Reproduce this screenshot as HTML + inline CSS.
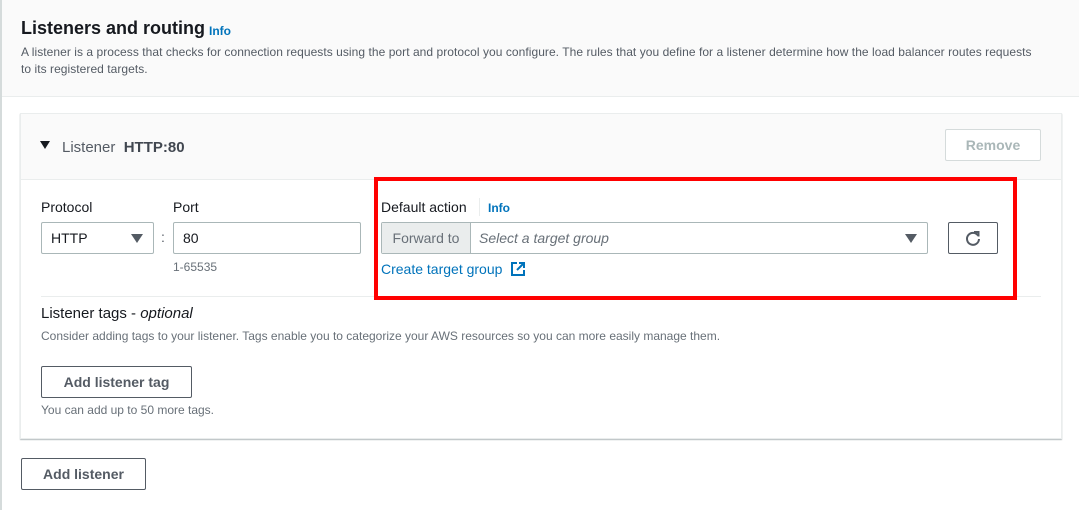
<!DOCTYPE html>
<html><head><meta charset="utf-8"><style>
*{box-sizing:border-box;margin:0;padding:0}
body{width:1079px;height:510px;background:#fff;font-family:"Liberation Sans",sans-serif;color:#16191f;position:relative;overflow:hidden}
.a{position:absolute;white-space:nowrap}
.hdr{left:0;top:0;width:1079px;height:97px;background:#fafafa;border-bottom:1px solid #eaeded}
.lb{left:0;top:0;width:2px;height:510px;background:#d5dbdb}
.card{left:20px;top:113px;width:1042px;height:326px;border:1px solid #eaeded;box-shadow:0 1px 1px rgba(0,28,36,.3)}
.ch{left:21px;top:114px;width:1040px;height:66px;background:#fafafa;border-bottom:1px solid #eaeded}
.btn{border:1px solid #545b64;border-radius:2px;background:#fff;font-weight:bold;font-size:14px;color:#545b64;display:flex;align-items:center;justify-content:center}
.inp{border:1px solid #aab7b8;border-radius:2px;background:#fff;font-size:14px;display:flex;align-items:center;padding-left:9px}
.lbl{font-size:14px;color:#16191f}
.sm{font-size:12px;color:#687078}
.tri{width:0;height:0;border-left:6px solid transparent;border-right:6px solid transparent;border-top:9px solid #545b64}
</style></head><body>
<div class="a hdr"></div>
<div class="a lb"></div>
<div class="a" style="left:21px;top:18px;font-size:18px;font-weight:bold">Listeners and routing</div>
<div class="a" style="left:209px;top:24px;font-size:12px;font-weight:bold;color:#0073bb">Info</div>
<div class="a" style="left:21px;top:44px;font-size:12px;color:#545b64;line-height:17px;letter-spacing:0.05px">A listener is a process that checks for connection requests using the port and protocol you configure. The rules that you define for a listener determine how the load balancer routes requests<br>to its registered targets.</div>

<div class="a card"></div>
<div class="a ch"></div>
<div class="a" style="left:40px;top:141px;width:0;height:0;border-left:5px solid transparent;border-right:5px solid transparent;border-top:8px solid #16191f"></div>
<div class="a" style="left:62px;top:139px;font-size:15px;color:#545b64">Listener&nbsp;&nbsp;<b style="color:#414750">HTTP:80</b></div>
<div class="a btn" style="left:945px;top:129px;width:96px;height:32px;border-color:#d5dbdb;color:#aab7b8">Remove</div>

<div class="a lbl" style="left:41px;top:199px">Protocol</div>
<div class="a lbl" style="left:173px;top:199px">Port</div>
<div class="a inp" style="left:41px;top:222px;width:113px;height:32px">HTTP</div>
<div class="a tri" style="left:131px;top:234px"></div>
<div class="a" style="left:161px;top:229px;font-size:14px;color:#545b64">:</div>
<div class="a inp" style="left:173px;top:222px;width:188px;height:32px">80</div>
<div class="a sm" style="left:173px;top:260px">1-65535</div>

<div class="a" style="left:41px;top:296px;width:1000px;height:1px;background:#eaeded"></div>

<div class="a lbl" style="left:381px;top:199px">Default action</div>
<div class="a" style="left:479px;top:198px;width:1px;height:18px;background:#eaeded"></div>
<div class="a" style="left:488px;top:201px;font-size:12px;font-weight:bold;color:#0073bb">Info</div>
<div class="a inp" style="left:381px;top:222px;width:547px;height:32px;padding-left:0">
<div style="width:89px;height:30px;background:#eaeded;border-right:1px solid #aab7b8;color:#687078;display:flex;align-items:center;justify-content:center">Forward to</div>
<div style="padding-left:8px;font-style:italic;color:#687078">Select a target group</div></div>
<div class="a tri" style="left:905px;top:234px"></div>
<div class="a btn" style="left:948px;top:222px;width:50px;height:32px">
<svg width="18" height="18" viewBox="0 0 18 18" fill="none" stroke="#545b64" stroke-width="2"><path d="M14 6.5A6 6 0 1 0 15 10"/><path d="M10 3h4.5v4.5"/></svg></div>
<div class="a" style="left:381px;top:261px;font-size:14px;color:#0073bb">Create target group</div>
<svg class="a" style="left:511px;top:262px" width="14" height="14" viewBox="0 0 14 14" fill="none" stroke="#0073bb" stroke-width="2"><path d="M6 1H1v12h12V8"/><path d="M8 1h5v5M13 1L6 8"/></svg>

<div class="a" style="left:374px;top:177px;width:643px;height:123px;border:4px solid #ff0000"></div>

<div class="a" style="left:41px;top:305px;font-size:15px">Listener tags - <i>optional</i></div>
<div class="a sm" style="left:41px;top:329px">Consider adding tags to your listener. Tags enable you to categorize your AWS resources so you can more easily manage them.</div>
<div class="a btn" style="left:41px;top:366px;width:151px;height:32px">Add listener tag</div>
<div class="a sm" style="left:41px;top:403px">You can add up to 50 more tags.</div>
<div class="a btn" style="left:21px;top:458px;width:125px;height:32px">Add listener</div>
</body></html>
